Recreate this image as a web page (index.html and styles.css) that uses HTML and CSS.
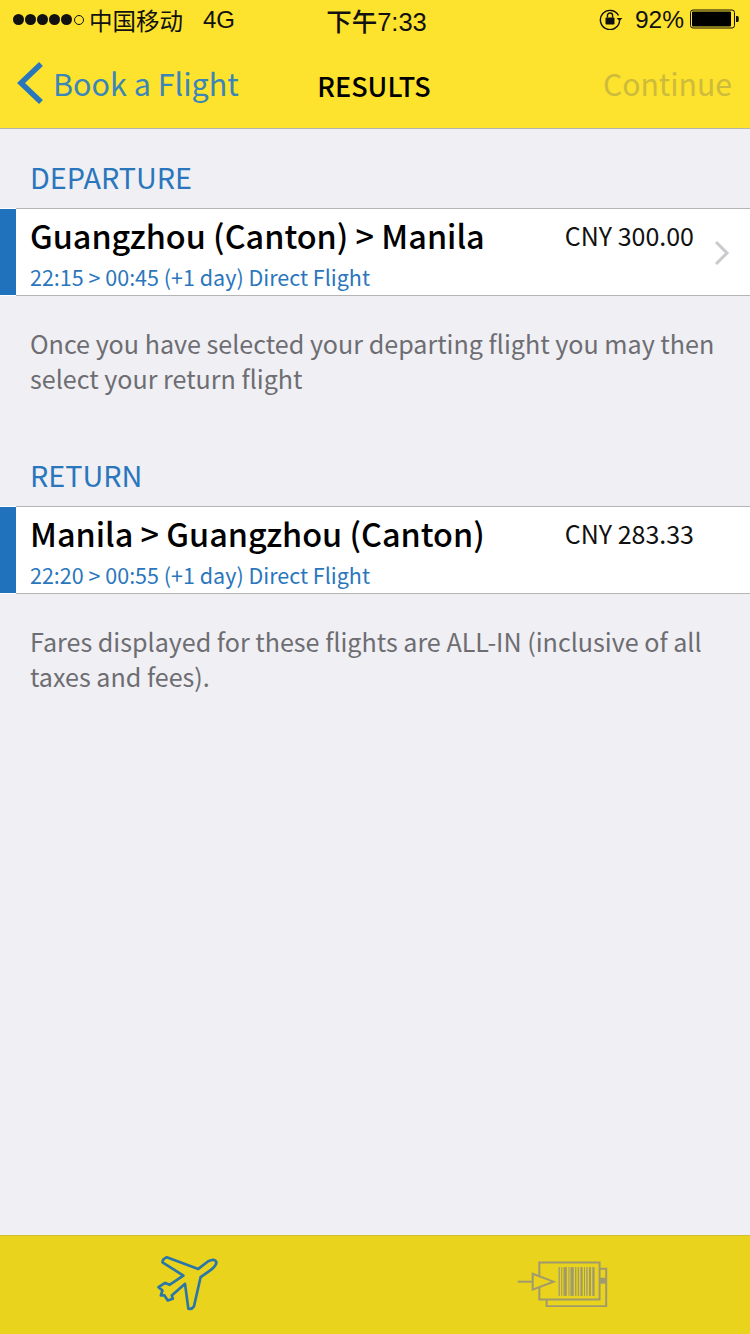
FILE: index.html
```html
<!DOCTYPE html>
<html lang="en">
<head>
<meta charset="utf-8">
<title>Results</title>
<link rel="stylesheet" href="styles.css">
</head>
<body>
<div class="app">
  <header class="header">
    <div class="status">
      <div class="status-left">
        <span class="signal"><i class="dot"></i><i class="dot"></i><i class="dot"></i><i class="dot"></i><i class="dot"></i><i class="dot empty"></i></span>
        <span class="carrier">中国移动</span>
        <span class="net">4G</span>
      </div>
      <div class="clock">下午7:33</div>
      <div class="status-right">
        <svg class="lock" width="24" height="22" viewBox="0 0 24 22" fill="none"><path d="M19.5 7.500A9.600 9.600 0 1 0 20.600 12" stroke="#111" stroke-width="1.400"/><path d="M17.500 10h6l-3 3z" fill="#111"/><rect x="6.500" y="9.500" width="9" height="7" rx="1" fill="#111"/><path d="M8.400 9.500V7.600a2.600 2.600 0 0 1 5.200 0v1.900" stroke="#111" stroke-width="1.400"/></svg>
        <span class="pct">92%</span>
        <svg class="battery" width="50" height="20" viewBox="0 0 50 20"><rect x="0.500" y="1" width="44" height="18" rx="2.500" fill="none" stroke="#111"/><rect x="2" y="2.500" width="39" height="15" rx="1" fill="#000"/><path d="M46 7h1.200a1.500 1.500 0 0 1 1.500 1.500v3a1.500 1.500 0 0 1-1.500 1.500H46z" fill="#111"/></svg>
      </div>
    </div>
    <nav class="nav">
      <div class="back">
        <svg class="back-icon" width="28" height="44" viewBox="0 0 28 44" fill="none"><path d="M25 3 5 22l20 19" stroke="#2a76bd" stroke-width="5.500"/></svg>
        <span>Book a Flight</span>
      </div>
      <div class="title">RESULTS</div>
      <div class="continue">Continue</div>
    </nav>
  </header>

  <main class="content">
    <section class="section">
      <h2 class="label">DEPARTURE</h2>
      <div class="row">
        <span class="bar"></span>
        <div class="row-inner">
          <div class="row-body">
            <div class="row-top"><span class="route">Guangzhou (Canton) &gt; Manila</span><span class="price">CNY 300.00</span></div>
            <div class="times">22:15 &gt; 00:45 (+1 day) Direct Flight</div>
          </div>
          <svg class="chev" width="16" height="26" viewBox="0 0 16 26" fill="none"><path d="M2 2l11 11L2 24" stroke="#c9c9ce" stroke-width="3"/></svg>
        </div>
      </div>
      <p class="note">Once you have selected your departing flight you may then select your return flight</p>
    </section>
    <section class="section">
      <h2 class="label">RETURN</h2>
      <div class="row">
        <span class="bar"></span>
        <div class="row-inner">
          <div class="row-body">
            <div class="row-top"><span class="route">Manila &gt; Guangzhou (Canton)</span><span class="price">CNY 283.33</span></div>
            <div class="times">22:20 &gt; 00:55 (+1 day) Direct Flight</div>
          </div>
          <span class="chev-space"></span>
        </div>
      </div>
      <p class="note">Fares displayed for these flights are ALL-IN (inclusive of all taxes and fees).</p>
    </section>
  </main>

  <footer class="tabbar">
    <div class="tab">
      <svg width="65" height="58" viewBox="75 40 195 175" fill="none" stroke="#2a76a8" stroke-width="8" stroke-linejoin="round" stroke-linecap="round"><path d="M110 50L205 85L235 62Q255 52 260 65Q258 78 240 90L212 110L192 198Q185 208 175 205L165 130L125 165L128 175L113 180L103 165L92 165L97 150L85 140L105 127L118 133L160 105L97 65Q97 55 110 50Z"/></svg>
    </div>
    <div class="tab">
      <svg width="93" height="48" viewBox="50 55.500 280 145" fill="none" stroke="#a09a6e" stroke-width="6"><path d="M55 124H100"/><path d="M100 100V148L163 124Z"/><path d="M120 106V66H302V178H120V140"/><path d="M302 85H322V198H142V178"/><rect x="302" y="112" width="20" height="18" fill="#a09a6e" stroke="none"/><g stroke="none" fill="#a09a6e"><rect x="178" y="80" width="4" height="87"/><rect x="186" y="80" width="3" height="87"/><rect x="193" y="80" width="10" height="87"/><rect x="208" y="80" width="3" height="87"/><rect x="214" y="80" width="10" height="87"/><rect x="228" y="80" width="4" height="87"/><rect x="236" y="80" width="4" height="87"/><rect x="244" y="80" width="7" height="87"/><rect x="255" y="80" width="3" height="87"/><rect x="262" y="80" width="4" height="87"/><rect x="270" y="80" width="6" height="87"/><rect x="280" y="80" width="7" height="87"/></g></svg>
    </div>
  </footer>
</div>
</body>
</html>
```

FILE: styles.css
```css
* { box-sizing: border-box; }
html, body { margin: 0; padding: 0; }
body {
  width: 750px;
  height: 1334px;
  overflow: hidden;
  background: #efeff4;
  font-family: "Noto Sans CJK SC", "Noto Sans", sans-serif;
}
.app {
  display: flex;
  flex-direction: column;
  height: 1334px;
}
.header {
  background: #fde22e;
  border-bottom: 1px solid #b5b5b0;
  height: 129px;
  flex: none;
}
.status {
  height: 40px;
  padding: 0 10px 2px 13px;
  display: grid;
  grid-template-columns: 1fr auto 1fr;
  align-items: center;
  font-family: "Liberation Sans", "Noto Sans CJK SC", sans-serif;
  font-size: 25px;
  color: #111;
}
.status-left { display: flex; align-items: center; }
.signal { display: flex; gap: 1px; margin-right: 5px; }
.dot { width: 11px; height: 11px; border-radius: 50%; background: #111; display: block; }
.dot.empty { background: none; border: 1px solid #111; width: 10px; height: 10px; margin: 1px 0 0 1px; }
.carrier { font-size: 23.500px; margin-right: 20px; padding-top: 2px; }
.net { font-size: 24px; padding-top: 2px; }
.clock { font-size: 25.500px; font-weight: 500; }
.status-right { display: flex; justify-content: flex-end; align-items: center; gap: 12px; }
.pct { font-size: 24.500px; margin-right: -6px; padding-top: 2px; }
.nav {
  height: 88px;
  padding: 0 18px 2px 16px;
  display: grid;
  grid-template-columns: 1fr auto 1fr;
  align-items: center;
}
.back {
  display: flex;
  align-items: center;
  gap: 9px;
  color: #3a86b8;
  font-size: 30.500px;
}
.title {
  padding-top: 4px;
  font-size: 27px;
  font-weight: 500;
  color: #000;
}
.continue {
  text-align: right;
  font-size: 30.200px;
  color: #cdbb3c;
}
.content { flex: 1; }
.label {
  margin: 0;
  padding: 16px 30px 0;
  height: 79px;
  display: flex;
  align-items: center;
  font-size: 28.800px;
  font-weight: 400;
  color: #2a76bd;
}
.row {
  height: 88px;
  background: #fff;
  display: flex;
}
.bar { width: 16px; flex: none; background: #2172bd; margin: 1px 0; }
.row-inner {
  flex: 1;
  min-width: 0;
  border-top: 1px solid #b5b5b8;
  border-bottom: 1px solid #b5b5b8;
  padding: 0 20px 0 14px;
  display: flex;
  align-items: center;
}
.row-body { flex: 1; min-width: 0; align-self: flex-start; }
.row-top { display: flex; justify-content: space-between; align-items: center; height: 51px; padding-right: 20px; }
.route { font-size: 32.400px; font-weight: 500; color: #000; }
.price { font-size: 25px; color: #111; }
.times { font-size: 21.500px; color: #2a76bd; line-height: 30px; margin-top: 2px; }
.chev { flex: none; margin-top: 2px; }
.chev-space { width: 16px; flex: none; }
.note {
  margin: 0;
  padding: 30px 30px 0;
  height: 131px;
  font-size: 25.100px;
  line-height: 35px;
  color: #6d6d72;
}
.tabbar {
  height: 99px;
  flex: none;
  background: #e9d31c;
  border-top: 1px solid #cfc02c;
  display: grid;
  grid-template-columns: 1fr 1fr;
}
.tab { display: flex; align-items: center; justify-content: center; padding-bottom: 5px; }
```
